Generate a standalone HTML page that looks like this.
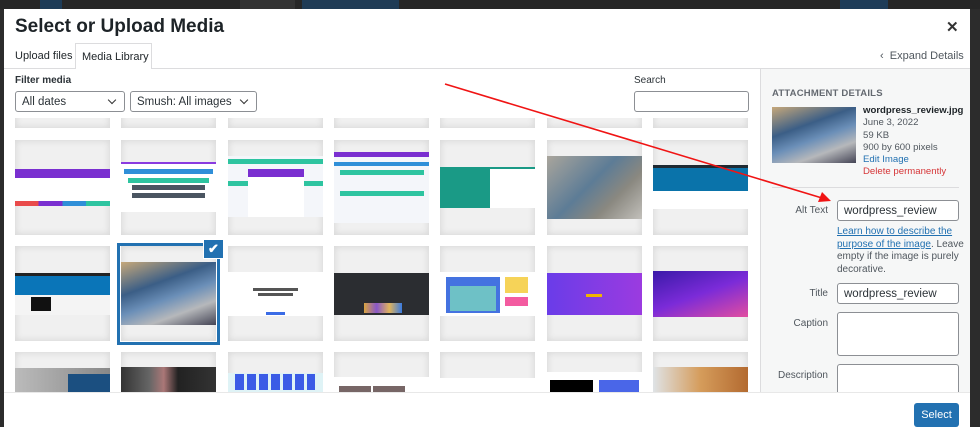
<!DOCTYPE html>
<html><head><meta charset="utf-8"><style>
*{box-sizing:border-box;margin:0;padding:0}
body{width:980px;height:427px;overflow:hidden;background:#2c2c2c;font-family:"Liberation Sans",sans-serif;position:relative;color:#1d2327}
.a{position:absolute;white-space:nowrap}
.modal{left:4px;top:9px;width:966px;height:418px;background:#fff}
.sel{border:1px solid #8c8f94;border-radius:3px;background:#fff;font-size:11.5px;color:#2c3338;padding:4px 0 0 6px;height:21px}
.sel:after{content:"";position:absolute;right:9px;top:5px;width:5px;height:5px;border-right:1.3px solid #333;border-bottom:1.3px solid #333;transform:rotate(45deg)}
.t{background:#f0f0f0;width:95px;height:95px;box-shadow:inset 0 0 8px rgba(0,0,0,.12);overflow:hidden}
.t i{position:absolute;left:0;width:95px;display:block}
.lbl{font-size:10px;color:#50575e;text-align:right;width:60px}
.in{background:#fff;border:1px solid #8c8f94;border-radius:3px;font-size:11.5px;padding:4px 0 0 6px;color:#2c3338}
.side{font-size:9.6px;color:#50575e;line-height:12.3px}
</style></head><body>
<div class="a" style="left:0;top:0;width:980px;height:9px;background:#262626"></div>
<div class="a" style="left:40px;top:0;width:22px;height:9px;background:#1d3b57"></div>
<div class="a" style="left:302px;top:0;width:97px;height:9px;background:#1f3b55"></div>
<div class="a" style="left:240px;top:0;width:55px;height:9px;background:#333"></div>
<div class="a" style="left:840px;top:0;width:48px;height:9px;background:#1e3c58"></div>
<div class="a modal"></div>
<div class="a" style="left:15px;top:16px;font-size:19px;font-weight:bold;color:#1d2327">Select or Upload Media</div>
<div class="a" style="left:946px;top:18px;font-size:15px;font-weight:bold;color:#333">✕</div>
<div class="a" style="left:4px;top:68px;width:966px;height:1px;background:#dcdcde"></div>
<div class="a" style="left:15px;top:50px;font-size:11px">Upload files</div>
<div class="a" style="left:75px;top:43px;width:77px;height:26px;border:1px solid #dcdcde;border-bottom:none;background:#fff;font-size:11px;padding:7px 0 0 6px">Media Library</div>
<div class="a" style="left:880px;top:50px;font-size:11px;color:#50575e">‹&nbsp; Expand Details</div>
<div class="a" style="left:15px;top:75px;font-size:10px;font-weight:bold;color:#2c3338">Filter media</div>
<div class="a sel" style="left:15px;top:91px;width:110px">All dates</div>
<div class="a sel" style="left:130px;top:91px;width:127px">Smush: All images</div>
<div class="a" style="left:634px;top:75px;font-size:10px;color:#2c3338">Search</div>
<div class="a" style="left:634px;top:91px;width:115px;height:21px;border:1px solid #8c8f94;border-radius:3px"></div>
<div class="a" style="left:4px;top:118px;width:756px;height:274px;overflow:hidden">
<div class="a t" style="left:11px;top:-85px"></div><div class="a t" style="left:117px;top:-85px"></div><div class="a t" style="left:224px;top:-85px"></div><div class="a t" style="left:330px;top:-85px"></div><div class="a t" style="left:436px;top:-85px"></div><div class="a t" style="left:543px;top:-85px"></div><div class="a t" style="left:649px;top:-85px"></div>
<div class="a t" style="left:11px;top:22px"><i style="top:29px;height:37px;background:linear-gradient(#7a2fd0 0 9px,#fff 9px 32px,#e8eaf0 32px)"></i><i style="top:61px;height:5px;background:linear-gradient(90deg,#e94b4b 25%,#7a2fd0 25% 50%,#2f8fd8 50% 75%,#2ec4a0 75%)"></i></div>
<div class="a t" style="left:117px;top:22px"><i style="top:22px;height:50px;background:#fff;border-top:2px solid #8a3be0"></i><i style="top:29px;height:5px;background:#2f8fd8;left:3px;width:89px"></i><i style="top:38px;height:5px;background:#2ec4a0;left:7px;width:81px"></i><i style="top:45px;height:5px;background:#4a5561;left:11px;width:73px"></i><i style="top:53px;height:5px;background:#4a5561;left:11px;width:73px"></i></div>
<div class="a t" style="left:224px;top:22px"><i style="top:16px;height:61px;background:#f4f6fa"></i><i style="top:19px;height:5px;background:#2ec4a0"></i><i style="top:41px;height:5px;background:#2ec4a0"></i><i style="left:20px;width:56px;top:29px;height:48px;background:#fff;border-top:8px solid #7a2fd0"></i></div>
<div class="a t" style="left:330px;top:22px"><i style="top:12px;height:71px;background:#f4f6fa;border-top:5px solid #7a2fd0"></i><i style="top:22px;height:4px;background:#2f8fd8"></i><i style="top:30px;height:5px;background:#2ec4a0;left:6px;width:84px"></i><i style="top:51px;height:5px;background:#2ec4a0;left:6px;width:84px"></i></div>
<div class="a t" style="left:436px;top:22px"><i style="top:27px;height:41px;background:#1a9a86"></i><i style="top:29px;height:39px;left:50px;width:45px;background:#fff"></i></div>
<div class="a t" style="left:543px;top:22px"><i style="top:16px;height:63px;background:linear-gradient(135deg,#a9a59c,#5d7c96 45%,#8a8880 70%,#c2c0bb)"></i></div>
<div class="a t" style="left:649px;top:22px"><i style="top:25px;height:44px;background:linear-gradient(#1f2a33 0 3px,#0a73aa 3px 26px,#fff 26px)"></i></div>
<div class="a t" style="left:11px;top:128px"><i style="top:27px;height:42px;background:linear-gradient(#222 0 3px,#0a75b8 3px 22px,#f4f4f4 22px)"></i><i style="top:51px;left:16px;width:20px;height:14px;background:#111"></i></div>
<div class="a t" style="left:117px;top:128px"><i style="top:16px;height:63px;background:linear-gradient(160deg,#c6a87a,#3b5e86 35%,#6b8fb8 55%,#b6b8bb 75%,#445)"></i></div>
<div class="a t" style="left:224px;top:128px"><i style="top:26px;height:44px;background:#fff"></i><i style="top:42px;left:25px;width:45px;height:3px;background:#555"></i><i style="top:47px;left:30px;width:35px;height:3px;background:#555"></i><i style="top:66px;left:38px;width:19px;height:3px;background:#3b6ce6"></i></div>
<div class="a t" style="left:330px;top:128px"><i style="top:27px;height:42px;background:#2b2d31"></i><i style="top:57px;left:30px;width:38px;height:10px;background:linear-gradient(90deg,#d9a441,#8857c8,#e0b35b,#3a7be0)"></i></div>
<div class="a t" style="left:436px;top:128px"><i style="top:26px;height:44px;background:#fff"></i><i style="top:31px;left:6px;width:54px;height:36px;background:#4472e0"></i><i style="top:40px;left:10px;width:46px;height:25px;background:#6ec1c6"></i><i style="top:31px;left:65px;width:23px;height:16px;background:#f6d358"></i><i style="top:51px;left:65px;width:23px;height:9px;background:#f35ba0"></i></div>
<div class="a t" style="left:543px;top:128px"><i style="top:27px;height:42px;background:linear-gradient(90deg,#6a3ce8,#9b3be0)"></i><i style="top:48px;left:39px;width:16px;height:3px;background:#f0b400"></i></div>
<div class="a t" style="left:649px;top:128px"><i style="top:25px;height:46px;background:linear-gradient(160deg,#3a1aa8,#7b2bd8 50%,#e24da0)"></i></div>
<div class="a t" style="left:11px;top:234px"><i style="top:16px;height:30px;background:linear-gradient(90deg,#bbb,#888)"></i><i style="top:22px;left:53px;width:42px;height:24px;background:#1b4f80"></i></div>
<div class="a t" style="left:117px;top:234px"><i style="top:15px;height:30px;background:linear-gradient(90deg,#333,#666 30%,#a77 45%,#222 60%,#333)"></i></div>
<div class="a t" style="left:224px;top:234px"><i style="top:21px;height:25px;background:#dff3f6"></i><i style="top:22px;left:7px;width:80px;height:16px;background:repeating-linear-gradient(90deg,#3b5ce6 0 9px,#dff3f6 9px 12px)"></i></div>
<div class="a t" style="left:330px;top:234px"><i style="top:25px;height:21px;background:#fff"></i><i style="top:34px;left:5px;width:32px;height:12px;background:#766"></i><i style="top:34px;left:39px;width:32px;height:12px;background:#766"></i></div>
<div class="a t" style="left:436px;top:234px"><i style="top:26px;height:20px;background:#fff"></i></div>
<div class="a t" style="left:543px;top:234px"><i style="top:20px;height:26px;background:#fff"></i><i style="top:28px;left:3px;width:43px;height:18px;background:#000"></i><i style="top:28px;left:52px;width:40px;height:18px;background:#4a66e8"></i></div>
<div class="a t" style="left:649px;top:234px"><i style="top:15px;height:31px;background:linear-gradient(90deg,#dfe3e6,#d59c5b 50%,#b36a30)"></i></div>
</div>
<div class="a" style="left:117px;top:243px;width:103px;height:102px;border:3px solid #2271b1"></div>
<div class="a" style="left:204px;top:240px;width:19px;height:18px;background:#2271b1;box-shadow:0 0 0 1px #fff;color:#fff;font-size:13px;text-align:center;line-height:18px;font-weight:bold">✔</div>
<div class="a" style="left:760px;top:69px;width:210px;height:323px;background:#f6f7f7;border-left:1px solid #dcdcde"></div>
<div class="a" style="left:772px;top:88px;font-size:9.5px;font-weight:bold;color:#646970;letter-spacing:.2px">ATTACHMENT DETAILS</div>
<div class="a" style="left:772px;top:107px;width:84px;height:56px;background:linear-gradient(160deg,#c6a87a,#3b5e86 35%,#6b8fb8 55%,#b6b8bb 75%,#445)"></div>
<div class="a side" style="left:863px;top:105px"><b style="color:#1d2327">wordpress_review.jpg</b><br>June 3, 2022<br>59 KB<br>900 by 600 pixels<br><span style="color:#2271b1">Edit Image</span><br><span style="color:#d63638">Delete permanently</span></div>
<div class="a" style="left:772px;top:187px;width:187px;height:1px;background:#dcdcde"></div>
<div class="a lbl" style="left:768px;top:205px">Alt Text</div>
<div class="a in" style="left:837px;top:200px;width:122px;height:21px">wordpress_review</div>
<div class="a" style="left:837px;top:226px;font-size:10px;color:#50575e;line-height:12.7px"><span style="color:#2271b1;text-decoration:underline">Learn how to describe the<br>purpose of the image</span>. Leave<br>empty if the image is purely<br>decorative.</div>
<div class="a lbl" style="left:768px;top:288px">Title</div>
<div class="a in" style="left:837px;top:283px;width:122px;height:21px">wordpress_review</div>
<div class="a lbl" style="left:768px;top:318px">Caption</div>
<div class="a in" style="left:837px;top:312px;width:122px;height:44px"></div>
<div class="a lbl" style="left:768px;top:370px">Description</div>
<div class="a in" style="left:837px;top:364px;width:122px;height:40px"></div>
<div class="a" style="left:4px;top:392px;width:966px;height:35px;background:#fff;border-top:1px solid #e8e8e8"></div>
<div class="a" style="left:914px;top:403px;width:45px;height:24px;background:#2271b1;border-radius:3px;color:#fff;font-size:11px;text-align:center;line-height:24px">Select</div>
<svg class="a" style="left:0;top:0" width="980" height="427"><line x1="445" y1="84" x2="822" y2="198" stroke="#f01414" stroke-width="1.6"/><polygon points="831,201 818,202 822,192" fill="#f01414"/></svg>
</body></html>
